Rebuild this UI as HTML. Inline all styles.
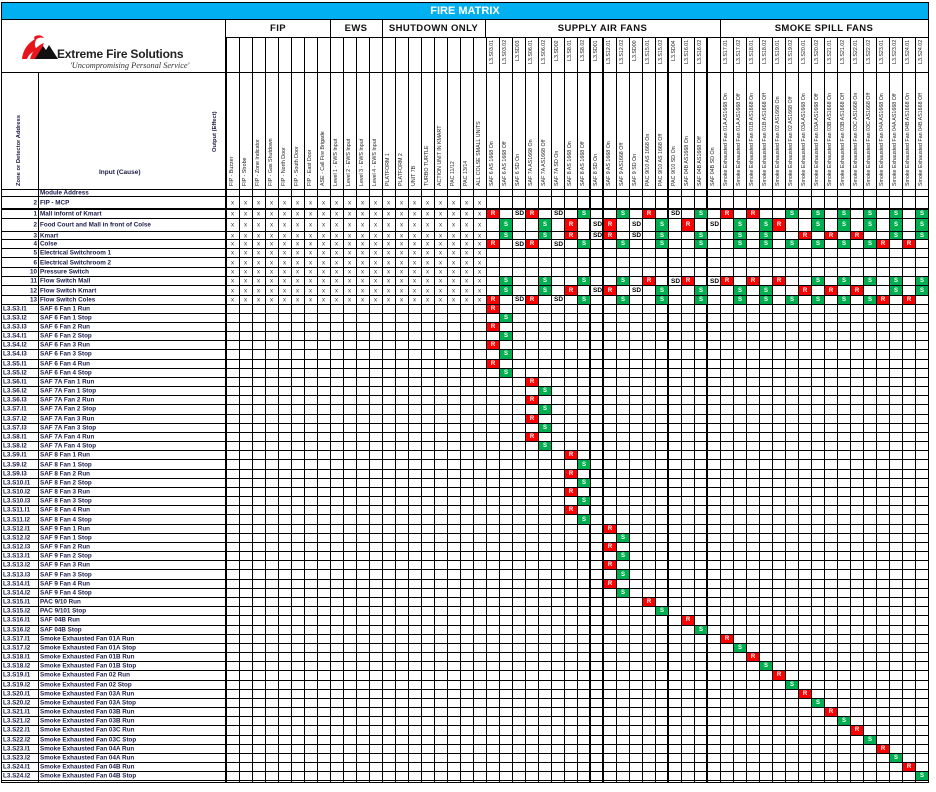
<!DOCTYPE html>
<html><head><meta charset="utf-8">
<style>
*{margin:0;padding:0;box-sizing:border-box}
body{width:936px;height:792px;background:#fff;position:relative;overflow:hidden;font-family:"Liberation Sans",sans-serif;color:#1a1a40}
.abs{position:absolute}
.title{left:1px;top:2px;width:928px;height:18px;background:#00b0f0;border:1px solid #000;color:#fff;font-weight:bold;font-size:11px;text-align:center;line-height:16px}
.grid{left:226px;top:37px;width:703px;height:746px;background:repeating-linear-gradient(to right,#000 0 1px,transparent 1px 13px);border-right:1px solid #000}
.hl{position:absolute;height:1px;background:#000}
.vl{position:absolute;width:1px;background:#000}
.grp{position:absolute;top:20px;height:17px;font-weight:bold;font-size:9.5px;letter-spacing:.4px;text-align:center;line-height:17px;color:#111}
.hc{position:absolute;left:226px;display:flex}
.hc span{width:13px;height:100%;writing-mode:vertical-rl;transform:rotate(180deg);font-size:5.3px;line-height:13px;white-space:nowrap;overflow:hidden;color:#222;padding:3px 0}
.hb span{text-align:end}
.rows{position:absolute;left:1px;top:189px;width:928px;display:flex;flex-direction:column}
.r{position:relative;border-bottom:1px solid #000;flex:none}
.r b{position:absolute;top:50%;transform:translateY(-50%);font-size:6.3px;white-space:nowrap;color:#1a1a4a}
.a{left:2px}.n{left:0;width:36px;text-align:right}.d{left:39px}
.r i{position:absolute;top:0;bottom:0;width:12px;font-style:normal;font-weight:bold;font-size:6px;text-align:center;display:flex;align-items:center;justify-content:center}
i.R{background:#ff0000;color:#fff}i.S{background:#00b050;color:#fff}i.D{color:#000;font-size:6.5px;width:13px}
.xs{position:absolute;left:229.7px;top:50%;transform:translateY(-50%);font-family:"Liberation Mono",monospace;font-size:6px;letter-spacing:9.4px;color:#333}
.c20{left:486px}.c21{left:499px}.c22{left:512px}.c23{left:525px}.c24{left:538px}.c25{left:551px}.c26{left:564px}.c27{left:577px}.c28{left:590px}.c29{left:603px}.c30{left:616px}.c31{left:629px}.c32{left:642px}.c33{left:655px}.c34{left:668px}.c35{left:681px}.c36{left:694px}.c37{left:707px}.c38{left:720px}.c39{left:733px}.c40{left:746px}.c41{left:759px}.c42{left:772px}.c43{left:785px}.c44{left:798px}.c45{left:811px}.c46{left:824px}.c47{left:837px}.c48{left:850px}.c49{left:863px}.c50{left:876px}.c51{left:889px}.c52{left:902px}.c53{left:915px}
.tk{position:absolute;width:2px;background:#000;top:37px;height:746px}
</style></head><body>
<div class="abs title">FIRE MATRIX</div>
<div class="abs grid"></div>
<div class="vl" style="left:1px;top:19px;height:764px"></div>
<div class="vl" style="left:225px;top:19px;height:764px"></div>
<div class="vl" style="left:38px;top:72px;height:711px"></div>
<div class="hl" style="left:1px;top:782px;width:928px"></div>
<div class="hl" style="left:226px;top:37px;width:703px"></div>
<div class="hl" style="left:1px;top:72px;width:928px"></div>
<div class="hl" style="left:1px;top:189px;width:928px"></div>
<div class="vl" style="left:928px;top:19px;height:20px"></div>
<div class="vl" style="left:330px;top:19px;height:18px"></div>
<div class="vl" style="left:382px;top:19px;height:18px"></div>
<div class="vl" style="left:485px;top:19px;height:18px"></div>
<div class="vl" style="left:720px;top:19px;height:18px"></div>
<div class="tk" style="left:589px"></div>
<div class="tk" style="left:602px"></div>
<div class="tk" style="left:667px"></div>
<div class="tk" style="left:706px"></div>
<div class="grp" style="left:226px;width:104px">FIP</div>
<div class="grp" style="left:330px;width:52px">EWS</div>
<div class="grp" style="left:382px;width:103px">SHUTDOWN ONLY</div>
<div class="grp" style="left:485px;width:235px">SUPPLY AIR FANS</div>
<div class="grp" style="left:720px;width:208px">SMOKE SPILL FANS</div>
<svg class="abs" style="left:20px;top:33px" width="40" height="28" viewBox="0 0 40 28">
<path d="M2 26 C3 16 9 9 17 5 C14 10 14 14 18 17 C13 18 9 21 7 26 Z" fill="#e8141b"/>
<path d="M10 26 C12 18 18 12 24 10 C22 14 23 17 27 19 C22 20 19 23 17 26 Z" fill="#e8141b"/>
<path d="M15 26 L23 13 L26 17 L29 12 L38 26 Z" fill="#111"/>
<path d="M14 4 C18 1 22 2 24 5 C20 4 17 5 15 8 Z" fill="#e8141b"/>
</svg>
<div class="abs" style="left:57px;top:47px;font-weight:bold;font-size:12px;color:#222;letter-spacing:-.2px">Extreme Fire Solutions</div>
<div class="abs" style="left:70px;top:61px;font-family:'Liberation Serif',serif;font-style:italic;font-size:8.3px;color:#333">'Uncompromising Personal Service'</div>
<div class="abs" style="left:12px;top:110px;width:14px;height:76px;writing-mode:vertical-rl;transform:rotate(180deg);font-size:5.8px;font-weight:bold;line-height:14px;white-space:nowrap;color:#1a1a4a">Zone or Detector Address</div>
<div class="abs" style="left:99px;top:169px;font-size:6.5px;font-weight:bold;color:#1a1a4a">Input (Cause)</div>
<div class="abs" style="left:209px;top:106px;width:12px;height:46px;writing-mode:vertical-rl;transform:rotate(180deg);font-size:5.8px;font-weight:bold;line-height:12px;white-space:nowrap;color:#1a1a4a">Output (Effect)</div>
<div class="hc hb" style="top:37px;height:35px">
<span></span><span></span><span></span><span></span><span></span><span></span><span></span><span></span><span></span><span></span><span></span><span></span><span></span><span></span><span></span><span></span><span></span><span></span><span></span><span></span>
<span>L3.S03.01</span><span>L3.S03.02</span><span>L3.SD03</span><span>L3.S06.01</span><span>L3.S06.02</span><span>L3.SD02</span><span>L3.S8.01</span><span>L3.S8.02</span><span>L3.SD01</span><span>L3.S12.01</span><span>L3.S12.02</span><span>L3.SD00</span><span>L3.S15.01</span><span>L3.S15.02</span><span>L3.SD04</span><span>L3.S16.01</span><span>L3.S16.02</span><span></span>
<span>L3.S17.01</span><span>L3.S17.02</span><span>L3.S18.01</span><span>L3.S18.02</span><span>L3.S19.01</span><span>L3.S19.02</span><span>L3.S20.01</span><span>L3.S20.02</span><span>L3.S21.01</span><span>L3.S21.02</span><span>L3.S22.01</span><span>L3.S22.02</span><span>L3.S23.01</span><span>L3.S23.02</span><span>L3.S24.01</span><span>L3.S24.02</span>
</div>
<div class="hc" style="top:72px;height:117px">
<span>FIP - Buzzer</span><span>FIP - Strobe</span><span>FIP - Zone Indicator</span><span>FIP - Gas Shutdown</span><span>FIP - North Door</span><span>FIP - South Door</span><span>FIP - East Door</span><span>ASE - Call Fire Brigade</span>
<span>Level 1 - EWS Input</span><span>Level 2 - EWS Input</span><span>Level 3 - EWS Input</span><span>Level 4 - EWS Input</span>
<span>PLATFORM 1</span><span>PLATFORM 2</span><span>UNIT 7B</span><span>TURBO TURTLE</span><span>ACTION UNIT IN KMART</span><span>PAC 11/12</span><span>PAC 13/14</span><span>ALL COLSE SMALL UNITS</span>
<span>SAF 6 AS 1668 On</span><span>SAF 6 AS 1668 Off</span><span>SAF 6 SD On</span><span>SAF 7A AS1668 On</span><span>SAF 7A AS1668 Off</span><span>SAF 7A SD On</span><span>SAF 8 AS 1668 On</span><span>SAF 8 AS 1668 Off</span><span>SAF 8 SD On</span><span>SAF 9 AS 1668 On</span><span>SAF 9 AS1668 Off</span><span>SAF 9 SD On</span><span>PAC 9/10 AS 1668 On</span><span>PAC 9/10 AS 1668 Off</span><span>PAC 9/10 SD On</span><span>SAF 04B AS1668 On</span><span>SAF 04B AS1668 Off</span><span>SAF 04B SD On</span>
<span>Smoke Exhausted Fan 01A AS1668 On</span><span>Smoke Exhausted Fan 01A AS1668 Off</span><span>Smoke Exhausted Fan 01B AS1668 On</span><span>Smoke Exhausted Fan 01B AS1668 Off</span><span>Smoke Exhausted Fan 02 AS1668 On</span><span>Smoke Exhausted Fan 02 AS1668 Off</span><span>Smoke Exhausted Fan 03A AS1668 On</span><span>Smoke Exhausted Fan 03A AS1668 Off</span><span>Smoke Exhausted Fan 03B AS1668 On</span><span>Smoke Exhausted Fan 03B AS1668 Off</span><span>Smoke Exhausted Fan 03C AS1668 On</span><span>Smoke Exhausted Fan 03C AS1668 Off</span><span>Smoke Exhausted Fan 04A AS1668 On</span><span>Smoke Exhausted Fan 04A AS1668 Off</span><span>Smoke Exhausted Fan 04B AS1668 On</span><span>Smoke Exhausted Fan 04B AS1668 Off</span>
</div>
<div class="rows">
<div class="r" style="height:8px"><b class="d">Module Address</b></div>
<div class="r" style="height:13px;border-bottom:2px solid #000"><b class="n">2</b><b class="d">FIP - MCP</b><span class="xs">xxxxxxxxxxxxxxxxxxxx</span></div>
<div class="r" style="height:8.5px"><b class="n">1</b><b class="d">Mall infornt of Kmart</b><span class="xs">xxxxxxxxxxxxxxxxxxxx</span><i class="R c20">R</i><i class="D c22">SD</i><i class="R c23">R</i><i class="D c25">SD</i><i class="S c27">S</i><i class="S c30">S</i><i class="R c32">R</i><i class="D c34">SD</i><i class="S c36">S</i><i class="R c38">R</i><i class="R c40">R</i><i class="S c43">S</i><i class="S c45">S</i><i class="S c47">S</i><i class="S c49">S</i><i class="S c51">S</i><i class="S c53">S</i></div>
<div class="r" style="height:13.5px"><b class="n">2</b><b class="d">Food Court and Mall in front of Colse</b><span class="xs">xxxxxxxxxxxxxxxxxxxx</span><i class="S c21">S</i><i class="S c24">S</i><i class="R c26">R</i><i class="D c28">SD</i><i class="R c29">R</i><i class="D c31">SD</i><i class="S c33">S</i><i class="R c35">R</i><i class="D c37">SD</i><i class="S c39">S</i><i class="S c41">S</i><i class="R c42">R</i><i class="S c45">S</i><i class="S c47">S</i><i class="S c49">S</i><i class="S c51">S</i><i class="S c53">S</i></div>
<div class="r" style="height:8px"><b class="n">3</b><b class="d">Kmart</b><span class="xs">xxxxxxxxxxxxxxxxxxxx</span><i class="S c21">S</i><i class="S c24">S</i><i class="R c26">R</i><i class="D c28">SD</i><i class="R c29">R</i><i class="D c31">SD</i><i class="S c33">S</i><i class="S c36">S</i><i class="S c39">S</i><i class="S c41">S</i><i class="R c44">R</i><i class="R c46">R</i><i class="R c48">R</i><i class="S c51">S</i><i class="S c53">S</i></div>
<div class="r" style="height:9px"><b class="n">4</b><b class="d">Colse</b><span class="xs">xxxxxxxxxxxxxxxxxxxx</span><i class="R c20">R</i><i class="D c22">SD</i><i class="R c23">R</i><i class="D c25">SD</i><i class="S c27">S</i><i class="S c30">S</i><i class="S c33">S</i><i class="S c36">S</i><i class="S c39">S</i><i class="S c41">S</i><i class="S c43">S</i><i class="S c45">S</i><i class="S c47">S</i><i class="S c49">S</i><i class="R c50">R</i><i class="R c52">R</i></div>
<div class="r" style="height:9px"><b class="n">5</b><b class="d">Electrical Switchroom 1</b><span class="xs">xxxxxxxxxxxxxxxxxxxx</span></div>
<div class="r" style="height:10px"><b class="n">6</b><b class="d">Electrical Switchroom 2</b><span class="xs">xxxxxxxxxxxxxxxxxxxx</span></div>
<div class="r" style="height:9px"><b class="n">10</b><b class="d">Pressure Switch</b><span class="xs">xxxxxxxxxxxxxxxxxxxx</span></div>
<div class="r" style="height:9px"><b class="n">11</b><b class="d">Flow Switch Mall</b><span class="xs">xxxxxxxxxxxxxxxxxxxx</span><i class="S c21">S</i><i class="S c24">S</i><i class="S c27">S</i><i class="S c30">S</i><i class="R c32">R</i><i class="D c34">SD</i><i class="R c35">R</i><i class="D c37">SD</i><i class="R c38">R</i><i class="R c40">R</i><i class="R c42">R</i><i class="S c45">S</i><i class="S c47">S</i><i class="S c49">S</i><i class="S c51">S</i><i class="S c53">S</i></div>
<div class="r" style="height:10px"><b class="n">12</b><b class="d">Flow Switch Kmart</b><span class="xs">xxxxxxxxxxxxxxxxxxxx</span><i class="S c21">S</i><i class="S c24">S</i><i class="R c26">R</i><i class="D c28">SD</i><i class="R c29">R</i><i class="D c31">SD</i><i class="S c33">S</i><i class="S c36">S</i><i class="S c39">S</i><i class="S c41">S</i><i class="R c44">R</i><i class="R c46">R</i><i class="R c48">R</i><i class="S c51">S</i><i class="S c53">S</i></div>
<div class="r" style="height:8.5px"><b class="n">13</b><b class="d">Flow Switch Coles</b><span class="xs">xxxxxxxxxxxxxxxxxxxx</span><i class="R c20">R</i><i class="D c22">SD</i><i class="R c23">R</i><i class="D c25">SD</i><i class="S c27">S</i><i class="S c30">S</i><i class="S c33">S</i><i class="S c36">S</i><i class="S c39">S</i><i class="S c41">S</i><i class="S c43">S</i><i class="S c45">S</i><i class="S c47">S</i><i class="S c49">S</i><i class="R c50">R</i><i class="R c52">R</i></div>
<div class="r" style="height:9.18px"><b class="a">L3.S3.I1</b><b class="d">SAF 6 Fan 1 Run</b><i class="R c20">R</i></div>
<div class="r" style="height:9.18px"><b class="a">L3.S3.I2</b><b class="d">SAF 6 Fan 1 Stop</b><i class="S c21">S</i></div>
<div class="r" style="height:9.18px"><b class="a">L3.S3.I3</b><b class="d">SAF 6 Fan 2 Run</b><i class="R c20">R</i></div>
<div class="r" style="height:9.18px"><b class="a">L3.S4.I1</b><b class="d">SAF 6 Fan 2 Stop</b><i class="S c21">S</i></div>
<div class="r" style="height:9.18px"><b class="a">L3.S4.I2</b><b class="d">SAF 6 Fan 3 Run</b><i class="R c20">R</i></div>
<div class="r" style="height:9.18px"><b class="a">L3.S4.I3</b><b class="d">SAF 6 Fan 3 Stop</b><i class="S c21">S</i></div>
<div class="r" style="height:9.18px"><b class="a">L3.S5.I1</b><b class="d">SAF 6 Fan 4 Run</b><i class="R c20">R</i></div>
<div class="r" style="height:9.18px"><b class="a">L3.S5.I2</b><b class="d">SAF 6 Fan 4 Stop</b><i class="S c21">S</i></div>
<div class="r" style="height:9.18px"><b class="a">L3.S6.I1</b><b class="d">SAF 7A Fan 1 Run</b><i class="R c23">R</i></div>
<div class="r" style="height:9.18px"><b class="a">L3.S6.I2</b><b class="d">SAF 7A Fan 1 Stop</b><i class="S c24">S</i></div>
<div class="r" style="height:9.18px"><b class="a">L3.S6.I3</b><b class="d">SAF 7A Fan 2 Run</b><i class="R c23">R</i></div>
<div class="r" style="height:9.18px"><b class="a">L3.S7.I1</b><b class="d">SAF 7A Fan 2 Stop</b><i class="S c24">S</i></div>
<div class="r" style="height:9.18px"><b class="a">L3.S7.I2</b><b class="d">SAF 7A Fan 3 Run</b><i class="R c23">R</i></div>
<div class="r" style="height:9.18px"><b class="a">L3.S7.I3</b><b class="d">SAF 7A Fan 3 Stop</b><i class="S c24">S</i></div>
<div class="r" style="height:9.18px"><b class="a">L3.S8.I1</b><b class="d">SAF 7A Fan 4 Run</b><i class="R c23">R</i></div>
<div class="r" style="height:9.18px"><b class="a">L3.S8.I2</b><b class="d">SAF 7A Fan 4 Stop</b><i class="S c24">S</i></div>
<div class="r" style="height:9.18px"><b class="a">L3.S9.I1</b><b class="d">SAF 8 Fan 1 Run</b><i class="R c26">R</i></div>
<div class="r" style="height:9.18px"><b class="a">L3.S9.I2</b><b class="d">SAF 8 Fan 1 Stop</b><i class="S c27">S</i></div>
<div class="r" style="height:9.18px"><b class="a">L3.S9.I3</b><b class="d">SAF 8 Fan 2 Run</b><i class="R c26">R</i></div>
<div class="r" style="height:9.18px"><b class="a">L3.S10.I1</b><b class="d">SAF 8 Fan 2 Stop</b><i class="S c27">S</i></div>
<div class="r" style="height:9.18px"><b class="a">L3.S10.I2</b><b class="d">SAF 8 Fan 3 Run</b><i class="R c26">R</i></div>
<div class="r" style="height:9.18px"><b class="a">L3.S10.I3</b><b class="d">SAF 8 Fan 3 Stop</b><i class="S c27">S</i></div>
<div class="r" style="height:9.18px"><b class="a">L3.S11.I1</b><b class="d">SAF 8 Fan 4 Run</b><i class="R c26">R</i></div>
<div class="r" style="height:9.18px"><b class="a">L3.S11.I2</b><b class="d">SAF 8 Fan 4 Stop</b><i class="S c27">S</i></div>
<div class="r" style="height:9.18px"><b class="a">L3.S12.I1</b><b class="d">SAF 9 Fan 1 Run</b><i class="R c29">R</i></div>
<div class="r" style="height:9.18px"><b class="a">L3.S12.I2</b><b class="d">SAF 9 Fan 1 Stop</b><i class="S c30">S</i></div>
<div class="r" style="height:9.18px"><b class="a">L3.S12.I3</b><b class="d">SAF 9 Fan 2 Run</b><i class="R c29">R</i></div>
<div class="r" style="height:9.18px"><b class="a">L3.S13.I1</b><b class="d">SAF 9 Fan 2 Stop</b><i class="S c30">S</i></div>
<div class="r" style="height:9.18px"><b class="a">L3.S13.I2</b><b class="d">SAF 9 Fan 3 Run</b><i class="R c29">R</i></div>
<div class="r" style="height:9.18px"><b class="a">L3.S13.I3</b><b class="d">SAF 9 Fan 3 Stop</b><i class="S c30">S</i></div>
<div class="r" style="height:9.18px"><b class="a">L3.S14.I1</b><b class="d">SAF 9 Fan 4 Run</b><i class="R c29">R</i></div>
<div class="r" style="height:9.18px"><b class="a">L3.S14.I2</b><b class="d">SAF 9 Fan 4 Stop</b><i class="S c30">S</i></div>
<div class="r" style="height:9.18px"><b class="a">L3.S15.I1</b><b class="d">PAC 9/10 Run</b><i class="R c32">R</i></div>
<div class="r" style="height:9.18px"><b class="a">L3.S15.I2</b><b class="d">PAC 9/101 Stop</b><i class="S c33">S</i></div>
<div class="r" style="height:9.18px"><b class="a">L3.S16.I1</b><b class="d">SAF 04B Run</b><i class="R c35">R</i></div>
<div class="r" style="height:9.18px"><b class="a">L3.S16.I2</b><b class="d">SAF 04B Stop</b><i class="S c36">S</i></div>
<div class="r" style="height:9.18px"><b class="a">L3.S17.I1</b><b class="d">Smoke Exhausted Fan 01A Run</b><i class="R c38">R</i></div>
<div class="r" style="height:9.18px"><b class="a">L3.S17.I2</b><b class="d">Smoke Exhausted Fan 01A Stop</b><i class="S c39">S</i></div>
<div class="r" style="height:9.18px"><b class="a">L3.S18.I1</b><b class="d">Smoke Exhausted Fan 01B Run</b><i class="R c40">R</i></div>
<div class="r" style="height:9.18px"><b class="a">L3.S18.I2</b><b class="d">Smoke Exhausted Fan 01B Stop</b><i class="S c41">S</i></div>
<div class="r" style="height:9.18px"><b class="a">L3.S19.I1</b><b class="d">Smoke Exhausted Fan 02 Run</b><i class="R c42">R</i></div>
<div class="r" style="height:9.18px"><b class="a">L3.S19.I2</b><b class="d">Smoke Exhausted Fan 02  Stop</b><i class="S c43">S</i></div>
<div class="r" style="height:9.18px"><b class="a">L3.S20.I1</b><b class="d">Smoke Exhausted Fan 03A Run</b><i class="R c44">R</i></div>
<div class="r" style="height:9.18px"><b class="a">L3.S20.I2</b><b class="d">Smoke Exhausted Fan 03A  Stop</b><i class="S c45">S</i></div>
<div class="r" style="height:9.18px"><b class="a">L3.S21.I1</b><b class="d">Smoke Exhausted Fan 03B Run</b><i class="R c46">R</i></div>
<div class="r" style="height:9.18px"><b class="a">L3.S21.I2</b><b class="d">Smoke Exhausted Fan 03B Run</b><i class="S c47">S</i></div>
<div class="r" style="height:9.18px"><b class="a">L3.S22.I1</b><b class="d">Smoke Exhausted Fan 03C Run</b><i class="R c48">R</i></div>
<div class="r" style="height:9.18px"><b class="a">L3.S22.I2</b><b class="d">Smoke Exhausted Fan 03C  Stop</b><i class="S c49">S</i></div>
<div class="r" style="height:9.18px"><b class="a">L3.S23.I1</b><b class="d">Smoke Exhausted Fan 04A Run</b><i class="R c50">R</i></div>
<div class="r" style="height:9.18px"><b class="a">L3.S23.I2</b><b class="d">Smoke Exhausted Fan 04A Run</b><i class="S c51">S</i></div>
<div class="r" style="height:9.18px"><b class="a">L3.S24.I1</b><b class="d">Smoke Exhausted Fan 04B Run</b><i class="R c52">R</i></div>
<div class="r" style="height:9.18px"><b class="a">L3.S24.I2</b><b class="d">Smoke Exhausted Fan 04B  Stop</b><i class="S c53">S</i></div>
</div>
</body></html>
